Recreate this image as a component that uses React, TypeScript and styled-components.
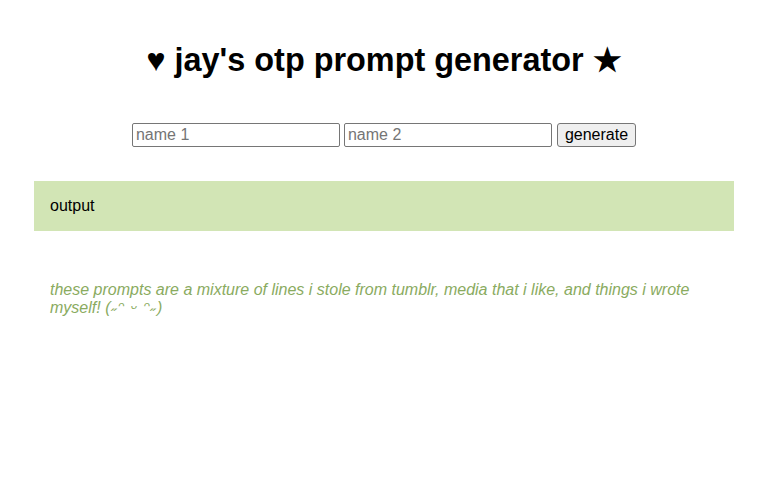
import React, { useState } from "react";
import styled, { createGlobalStyle } from "styled-components";

const Global = createGlobalStyle`
  body {
    margin: 8px;
    background: #ffffff;
    font-family: "Liberation Sans", Arial, sans-serif;
    color: #000000;
  }
`;

const Page = styled.div`
  max-width: 700px;
  margin: 0 auto;
  padding-top: 34px;
`;

const Title = styled.h1`
  margin: 0;
  font-size: 32.4px;
  font-weight: bold;
  line-height: 37px;
  text-align: center;
`;

const Form = styled.div`
  display: flex;
  justify-content: center;
  align-items: center;
  gap: 4px;
  margin-top: 44px;
`;

const NameInput = styled.input`
  box-sizing: border-box;
  width: 208px;
  height: 24px;
  padding: 1px 3px;
  border: 1px solid #767676;
  border-radius: 2px;
  font-family: "Liberation Sans", Arial, sans-serif;
  font-size: 16px;
  &::placeholder {
    color: #757575;
  }
`;

const GenerateButton = styled.button`
  box-sizing: border-box;
  height: 24px;
  margin-left: 1px;
  padding: 1px 7px;
  border: 1px solid #767676;
  border-radius: 3px;
  background: #efefef;
  font-family: "Liberation Sans", Arial, sans-serif;
  font-size: 16px;
  color: #000;
`;

const Output = styled.div`
  margin-top: 34px;
  background: #d2e5b5;
  padding: 0 16px;
  height: 50px;
  display: flex;
  align-items: center;
  font-size: 16px;
`;

const Note = styled.p`
  margin: 50px 0 0;
  padding: 0 16px;
  font-style: italic;
  font-size: 16px;
  line-height: 18px;
  color: #8aab5f;
`;

const Face = styled.span`
  letter-spacing: 1px;
`;

export default function App() {
  const [a, setA] = useState("");
  const [b, setB] = useState("");
  return (
    <>
      <Global />
      <Page>
        <Title>♥ jay's otp prompt generator ★</Title>
        <Form>
          <NameInput placeholder="name 1" value={a} onChange={(e) => setA(e.target.value)} />
          <NameInput placeholder="name 2" value={b} onChange={(e) => setB(e.target.value)} />
          <GenerateButton>generate</GenerateButton>
        </Form>
        <Output>output</Output>
        <Note>
          these prompts are a mixture of lines i stole from tumblr, media that i like, and things i wrote myself!{" "}
          <Face>(˶ᵔ ᵕ ᵔ˶)</Face>
        </Note>
      </Page>
    </>
  );
}
